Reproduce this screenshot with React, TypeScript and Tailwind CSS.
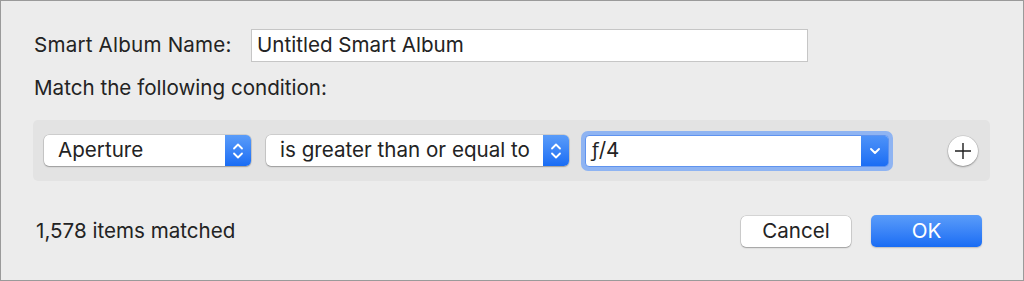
import React from 'react';

function UpDown() {
  return (
    <svg width="12" height="20" viewBox="0 0 12 20" fill="none" stroke="white" strokeWidth="1.8" strokeLinecap="round" strokeLinejoin="round">
      <path d="M2 7.5 L6 3.5 L10 7.5" />
      <path d="M2 12.5 L6 16.5 L10 12.5" />
    </svg>
  );
}

function PopUp({ label, width }: { label: string; width: string }) {
  return (
    <div
      className={`${width} h-[31px] flex rounded-[5px] bg-white shadow-[0_0_0_0.5px_rgba(0,0,0,0.18),0_1px_1.5px_rgba(0,0,0,0.25)] overflow-hidden`}
    >
      <div className="flex-1 pl-[14px] flex items-center text-[20.6px] text-[#232323] leading-none">{label}</div>
      <div className="w-[26px] flex items-center justify-center bg-gradient-to-b from-[#5a9cf9] to-[#186cf4]">
        <UpDown />
      </div>
    </div>
  );
}

export default function App() {
  return (
    <div className="w-[1024px] h-[281px] border border-[#9a9a9a] bg-[#ececec] font-[Inter,sans-serif] text-[#232323] flex flex-col">
      {/* name row */}
      <div className="flex items-center pt-[28px] pl-[33px]">
        <div className="w-[217px] text-[20.6px] leading-none tracking-[0.2px]">Smart Album Name:</div>
        <div className="w-[557px] h-[33px] bg-white border border-[#c6c6c6] flex items-center pl-[5px] text-[20.6px] leading-none">
          Untitled Smart Album
        </div>
      </div>

      <div className="mt-[14px] pl-[33px] h-6 flex items-center text-[20.6px] leading-none">Match the following condition:</div>

      {/* condition panel */}
      <div className="mt-[20px] ml-[32px] w-[957px] h-[61px] rounded-[5px] bg-[#e3e3e3] flex items-center pl-[11px]">
        <PopUp label="Aperture" width="w-[207px]" />
        <div className="w-[15px]" />
        <PopUp label="is greater than or equal to" width="w-[303px]" />
        <div className="w-[12px]" />
        <div className="w-[312px] h-[40px] rounded-[7px] bg-[#8fb4f2] p-[4px]">
          <div className="h-full flex rounded-[4px] overflow-hidden bg-white border border-[#5f93ef]">
            <div className="flex-1 pl-[6px] flex items-center text-[20.6px] leading-none">
              <span className="font-['DejaVu_Sans',sans-serif] text-[19px]">ƒ</span>/4
            </div>
            <div className="w-[27px] flex items-center justify-center bg-gradient-to-b from-[#4d92f8] to-[#1a6df4]">
              <svg width="12" height="8" viewBox="0 0 12 8" fill="none" stroke="white" strokeWidth="1.9" strokeLinecap="round" strokeLinejoin="round">
                <path d="M2 2 L6 6 L10 2" />
              </svg>
            </div>
          </div>
        </div>
        <div className="w-[55px]" />
        <div className="w-[30px] h-[30px] rounded-full bg-white shadow-[0_0_0_0.5px_rgba(0,0,0,0.15),0_1px_2px_rgba(0,0,0,0.3)] flex items-center justify-center">
          <svg width="18" height="18" viewBox="0 0 18 18" stroke="#1f1f1f" strokeWidth="1.4">
            <path d="M9 1 V17 M1 9 H17" />
          </svg>
        </div>
      </div>

      {/* footer */}
      <div className="mt-[34px] flex items-center pl-[35px] pr-[41px]">
        <div className="flex-1 text-[20.6px] leading-none">1,578 items matched</div>
        <button className="w-[110px] h-[31px] rounded-[5px] bg-white shadow-[0_0_0_0.5px_rgba(0,0,0,0.2),0_1px_1.5px_rgba(0,0,0,0.25)] text-[20.6px] leading-none text-[#232323]">
          Cancel
        </button>
        <button className="ml-[20px] w-[111px] h-[32px] rounded-[5px] bg-gradient-to-b from-[#5a9cf9] to-[#186cf4] shadow-[0_1px_1.5px_rgba(0,0,0,0.2)] text-[20.6px] leading-none text-white">
          OK
        </button>
      </div>
    </div>
  );
}
